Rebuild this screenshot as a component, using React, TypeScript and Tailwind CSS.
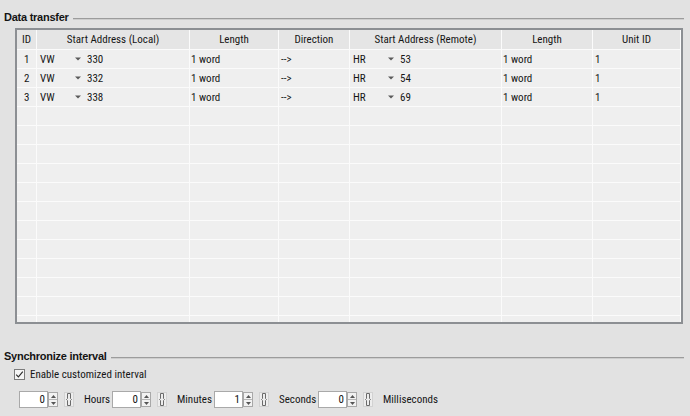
import React from "react";

const NARROW = "font-['Liberation_Sans_Narrow','Arial_Narrow','Roboto_Condensed',sans-serif]";

function Tri() {
  return (
    <svg width="6" height="4" viewBox="0 0 6 4" className="shrink-0">
      <polygon points="0,0.5 6,0.5 3,3.5" fill="#5a5a5a" />
    </svg>
  );
}

function Heading({ text }: { text: string }) {
  return (
    <div className="flex h-[12px] items-end pl-[4px] pr-[6px]">
      <span className="font-['Liberation_Sans',Arial,sans-serif] text-[11px] font-bold leading-[12px] tracking-[-0.25px] text-[#141414] whitespace-nowrap">
        {text}
      </span>
      <div className="ml-[4px] mb-[3px] h-[2px] flex-1 border-t border-[#9c9c9c] border-b border-b-[#cdcdcd]" />
    </div>
  );
}

const rows = [
  { id: "1", local: "330", remote: "53" },
  { id: "2", local: "332", remote: "54" },
  { id: "3", local: "338", remote: "69" },
];

const cell = "border-r border-b border-[#fbfbfb] flex items-center text-[11px] leading-none text-[#161616] overflow-hidden whitespace-nowrap";
const cols = "grid grid-cols-[20px_153px_89px_71px_152px_91px_88px]";

function HeaderRow() {
  const heads = ["ID", "Start Address (Local)", "Length", "Direction", "Start Address (Remote)", "Length", "Unit ID"];
  return (
    <div className={`${cols} h-[20px] bg-[#e5e5e5]`}>
      {heads.map((h, i) => (
        <div key={i} className={`${cell} justify-center text-[#222]`}>
          {h}
        </div>
      ))}
    </div>
  );
}

function DataRow({ r }: { r?: { id: string; local: string; remote: string } }) {
  return (
    <div className={`${cols} h-[19px] bg-[#efefef]`}>
      <div className={`${cell} pl-[7px]`}>{r ? r.id : ""}</div>
      <div className={`${cell} pl-[3px]`}>
        {r && (
          <>
            <span className="w-[35px]">VW</span>
            <Tri />
            <span className="ml-[6px]">{r.local}</span>
          </>
        )}
      </div>
      <div className={`${cell} pl-[1px]`}>{r ? "1 word" : ""}</div>
      <div className={`${cell} pl-[2px]`}>{r ? "-->" : ""}</div>
      <div className={`${cell} pl-[3px]`}>
        {r && (
          <>
            <span className="w-[35px]">HR</span>
            <Tri />
            <span className="ml-[6px]">{r.remote}</span>
          </>
        )}
      </div>
      <div className={`${cell} pl-[1px]`}>{r ? "1 word" : ""}</div>
      <div className={`${cell} pl-[2px]`}>{r ? "1" : ""}</div>
    </div>
  );
}

function Spin() {
  return (
    <div className="flex h-[15px] w-[10px] flex-col border border-[#a8a8a8] bg-[#f2f2f2]">
      <div className="flex flex-1 items-center justify-center border-b border-[#b5b5b5]">
        <svg width="5" height="3" viewBox="0 0 5 3">
          <polygon points="0,3 5,3 2.5,0" fill="#555" />
        </svg>
      </div>
      <div className="flex flex-1 items-center justify-center">
        <svg width="5" height="3" viewBox="0 0 5 3">
          <polygon points="0,0 5,0 2.5,3" fill="#555" />
        </svg>
      </div>
    </div>
  );
}

function Bracket() {
  return (
    <div className="ml-[6px] flex h-[15px] w-[10px] items-center justify-center border border-[#d2d2d2] bg-[#ededed]">
      <svg width="6" height="13" viewBox="0 0 6 13">
        <path
          d="M1.5 0.5 H4.5 V5.5 L5.5 6.5 L4.5 7.5 V12.5 H1.5 V7.5 L0.5 6.5 L1.5 5.5 Z"
          fill="none"
          stroke="#6a6a6a"
          strokeWidth="1"
        />
      </svg>
    </div>
  );
}

function SpinGroup({ value, label, w }: { value: string; label: string; w: string }) {
  return (
    <div className="flex items-center">
      <div className="flex h-[17px] w-[29px] items-center justify-end border border-[#a9a9a9] bg-white pr-[2px] text-[11px] leading-none text-[#111]">
        {value}
      </div>
      <Spin />
      <Bracket />
      <span className={`ml-[10px] ${w} text-[11px] leading-none text-[#161616]`}>{label}</span>
    </div>
  );
}

export default function App() {
  const empty = Array.from({ length: 12 });
  return (
    <div className={`h-[416px] w-[690px] overflow-hidden bg-[#e2e2e2] ${NARROW}`}>
      <div className="pt-[11px]">
        <Heading text="Data transfer" />
      </div>
      <div className="ml-[15px] mt-[5px] h-[296px] w-[668px] overflow-hidden border-2 border-[#8c8f93] bg-[#efefef]">
        <HeaderRow />
        {rows.map((r) => (
          <DataRow key={r.id} r={r} />
        ))}
        {empty.map((_, i) => (
          <DataRow key={i} />
        ))}
      </div>
      <div className="mt-[26px]">
        <Heading text="Synchronize interval" />
      </div>
      <div className="mt-[6px] flex h-[12px] items-center pl-[14px]">
        <div className="flex h-[11px] w-[11px] items-center justify-center border border-[#7b7b7b] bg-[#f5f5f5]">
          <svg width="9" height="9" viewBox="0 0 9 9">
            <path d="M1.2 4.6 L3.4 6.9 L7.8 1.6" fill="none" stroke="#2b2b2b" strokeWidth="1.1" />
          </svg>
        </div>
        <span className="ml-[5px] text-[11px] leading-none text-[#161616]">Enable customized interval</span>
      </div>
      <div className="mt-[11px] flex items-center pl-[19px]">
        <SpinGroup value="0" label="Hours" w="w-[28px]" />
        <SpinGroup value="0" label="Minutes" w="w-[37px]" />
        <SpinGroup value="1" label="Seconds" w="w-[39px]" />
        <SpinGroup value="0" label="Milliseconds" w="w-[60px]" />
      </div>
    </div>
  );
}
